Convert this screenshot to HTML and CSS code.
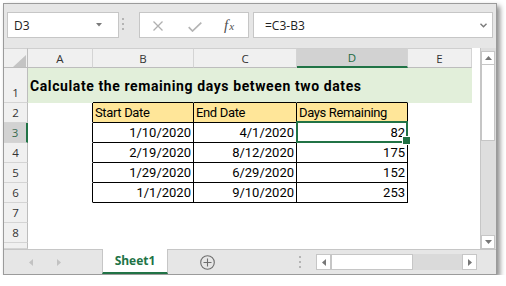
FILE: index.html
```html
<!DOCTYPE html>
<html>
<head>
<meta charset="utf-8">
<title>Excel - remaining days</title>
<link rel="stylesheet" href="styles.css">
</head>
<body>
<div class="window">
  <div class="fbar">
    <div class="namebox">
      <span>D3</span>
      <svg class="dd" width="6" height="4" viewBox="0 0 6 4"><path d="M0 0H6L3 3.5Z"/></svg>
    </div>
    <div class="grip"><i></i><i></i><i></i></div>
    <div class="fxbox">
      <svg class="x-ic" width="10" height="10" viewBox="0 0 10 10"><path d="M0.5 0.5L9.5 9.5M9.5 0.5L0.5 9.5"/></svg>
      <svg class="ok-ic" width="14" height="10" viewBox="0 0 14 10"><path d="M0.7 5.2L4.5 9L13.3 0.6"/></svg>
      <span class="fx"><i class="fx-f">f</i><i class="fx-x">x</i></span>
    </div>
    <div class="formula">
      <span>=C3-B3</span>
      <svg class="chev" width="7" height="5" viewBox="0 0 7 5"><path d="M0.5 0.8L3.5 3.8L6.5 0.8"/></svg>
    </div>
  </div>

  <div class="main">
    <div class="sheet">
      <!-- header row -->
      <div class="ch corner"><svg width="13" height="12" viewBox="0 0 13 12"><path d="M13 0V12H0Z"/></svg></div>
      <div class="ch">A</div>
      <div class="ch">B</div>
      <div class="ch">C</div>
      <div class="ch sel">D</div>
      <div class="ch">E</div>
      <div class="c gap"></div>

      <!-- row 1 -->
      <div class="rh">1</div>
      <div class="c g title">Calculate the remaining days between two dates</div>
      <div class="c g tb"></div>
      <div class="c g tb"></div>
      <div class="c g tb"></div>
      <div class="c g"></div>
      <div class="c gap"></div>

      <!-- row 2 -->
      <div class="rh">2</div>
      <div class="c tl"></div>
      <div class="c t hd">Start Date</div>
      <div class="c t hd">End Date</div>
      <div class="c t hd">Days Remaining</div>
      <div class="c"></div>
      <div class="c gap"></div>

      <!-- row 3 -->
      <div class="rh sel">3</div>
      <div class="c tl"></div>
      <div class="c t r">1/10/2020</div>
      <div class="c t r">4/1/2020</div>
      <div class="c t r active">82</div>
      <div class="c"></div>
      <div class="c gap"></div>

      <!-- row 4 -->
      <div class="rh">4</div>
      <div class="c tl"></div>
      <div class="c t r">2/19/2020</div>
      <div class="c t r">8/12/2020</div>
      <div class="c t r">175</div>
      <div class="c"></div>
      <div class="c gap"></div>

      <!-- row 5 -->
      <div class="rh">5</div>
      <div class="c tl"></div>
      <div class="c t r">1/29/2020</div>
      <div class="c t r">6/29/2020</div>
      <div class="c t r">152</div>
      <div class="c"></div>
      <div class="c gap"></div>

      <!-- row 6 -->
      <div class="rh">6</div>
      <div class="c tl"></div>
      <div class="c t r">1/1/2020</div>
      <div class="c t r">9/10/2020</div>
      <div class="c t r">253</div>
      <div class="c"></div>
      <div class="c gap"></div>

      <!-- row 7 -->
      <div class="rh">7</div>
      <div class="c"></div><div class="c"></div><div class="c"></div><div class="c"></div><div class="c"></div>
      <div class="c gap"></div>

      <!-- row 8 -->
      <div class="rh">8</div>
      <div class="c"></div><div class="c"></div><div class="c"></div><div class="c"></div><div class="c"></div>
      <div class="c gap"></div>

      <!-- row 9 (cut) -->
      <div class="rh cut">9</div>
      <div class="c"></div><div class="c"></div><div class="c"></div><div class="c"></div><div class="c"></div>
      <div class="c gap"></div>
    </div>

    <div class="vscroll">
      <div class="sbtn"><svg width="7" height="4" viewBox="0 0 7 4"><path d="M0 4H7L3.5 0Z"/></svg></div>
      <div class="vthumb"></div>
      <div class="vtrack"></div>
      <div class="sbtn"><svg width="7" height="4" viewBox="0 0 7 4"><path d="M0 0H7L3.5 4Z"/></svg></div>
    </div>
  </div>

  <div class="tabbar">
    <div class="nav">
      <svg class="navl" width="4" height="7" viewBox="0 0 4 7"><path d="M4 0V7L0 3.5Z"/></svg>
      <svg class="navr" width="4" height="7" viewBox="0 0 4 7"><path d="M0 0V7L4 3.5Z"/></svg>
    </div>
    <div class="tab">Sheet1</div>
    <svg class="add" width="15" height="15" viewBox="0 0 15 15"><circle cx="7.5" cy="7.5" r="6.8"/><path d="M7.5 3.5V11.5M3.5 7.5H11.5"/></svg>
    <div class="grip grip2"><i></i><i></i><i></i></div>
    <div class="hscroll">
      <div class="hbtn"><svg width="4" height="7" viewBox="0 0 4 7"><path d="M4 0V7L0 3.5Z"/></svg></div>
      <div class="hthumb"></div>
      <div class="htrack"></div>
      <div class="hbtn"><svg width="4" height="7" viewBox="0 0 4 7"><path d="M0 0V7L4 3.5Z"/></svg></div>
    </div>
  </div>
</div>
</body>
</html>
```

FILE: styles.css
```css
* { box-sizing: border-box; }

body {
  margin: 0;
  background: #ffffff;
}

.window {
  margin: 3px 0 0 3px;
  width: 494px;
  height: 272px;
  border: 1px solid #9b9b9b;
  background: #e6e6e6;
  box-shadow: 3px 3px 5px rgba(0, 0, 0, 0.45);
  display: flex;
  flex-direction: column;
  overflow: hidden;
}

/* ---------- formula bar ---------- */
.fbar {
  height: 44px;
  flex: none;
  display: flex;
  align-items: flex-start;
  padding: 8px 3px 0 3px;
}

.namebox {
  width: 112px;
  height: 26px;
  background: #fff;
  border: 1px solid #c6c6c6;
  display: flex;
  align-items: center;
  justify-content: space-between;
  padding: 0 16px 0 6px;
  font: 12px "Open Sans", sans-serif;
  color: #222;
}

.dd { fill: #7a7a7a; }

.grip {
  width: 20px;
  display: flex;
  flex-direction: column;
  gap: 3px;
  padding-left: 3px;
  margin-top: 6px;
}

.grip i {
  display: block;
  width: 2px;
  height: 2px;
  background: #b4b4b4;
}

.fxbox {
  width: 110px;
  height: 26px;
  background: #fff;
  border: 1px solid #c6c6c6;
  display: flex;
  align-items: center;
}

.x-ic {
  margin-left: 13px;
  margin-top: 2px;
  stroke: #b0b0b0;
  stroke-width: 1.3;
  fill: none;
}

.ok-ic {
  margin-left: 25px;
  margin-top: 3px;
  stroke: #b4b4b4;
  stroke-width: 1.7;
  fill: none;
}

.fx {
  margin-left: 22px;
  font-family: "Liberation Serif", serif;
  color: #505050;
  display: flex;
  align-items: baseline;
}

.fx-f { font-size: 15px; }
.fx-x { font-size: 11px; margin-left: 1px; }

.formula {
  flex: 1;
  margin-left: 4px;
  height: 26px;
  background: #fff;
  border: 1px solid #c6c6c6;
  display: flex;
  align-items: center;
  justify-content: space-between;
  padding: 0 5px 0 11px;
  font: 12px "Open Sans", sans-serif;
  color: #222;
}

.chev {
  stroke: #7a7a7a;
  stroke-width: 1.4;
  fill: none;
}

/* ---------- sheet ---------- */
.main {
  height: 201px;
  flex: none;
  display: flex;
  background: #fff;
}

.sheet {
  width: 476px;
  display: grid;
  grid-template-columns: 24px 65px 101px 103px 111px 64px 8px;
  grid-template-rows: 20px 35px repeat(7, 20px) 6px;
  overflow: hidden;
}

.c {
  border-right: 1px solid #fff;
  border-bottom: 1px solid #fff;
  font: 13px Roboto, sans-serif;
  color: #000;
  padding: 0 2px;
  display: flex;
  align-items: center;
  white-space: nowrap;
  overflow: hidden;
}

.c.gap { border: none; }

.r { justify-content: flex-end; }

.ch {
  background: #f0f0f0;
  border-top: 1px solid #cfcfcf;
  border-right: 1px solid #d4d4d4;
  border-bottom: 1px solid #bdbdbd;
  display: flex;
  align-items: center;
  justify-content: center;
  font: 11.5px "Open Sans", sans-serif;
  color: #333;
}

.ch.corner {
  border-right-color: #bdbdbd;
  justify-content: flex-end;
  align-items: flex-end;
  padding-right: 1px;
}

.corner svg { fill: #c4c4c4; display: block; }

.ch.sel {
  background: #d2d2d2;
  border-bottom: 2px solid #217346;
  color: #1d6b41;
}

.rh {
  background: #f0f0f0;
  border-right: 1px solid #bdbdbd;
  border-bottom: 1px solid #d4d4d4;
  display: flex;
  justify-content: center;
  align-items: flex-end;
  font: 11.5px/19px "Open Sans", sans-serif;
  color: #333;
  overflow: hidden;
}

.rh.cut { align-items: flex-start; }

.rh.sel {
  background: #d2d2d2;
  border-right: 2px solid #217346;
  color: #3b6b51;
}

.g {
  background: #e2efda;
  border-right-color: #e2efda;
  border-bottom-color: #e2efda;
}

.g.tb { border-bottom-color: #000; }

.title {
  font-weight: bold;
  font-size: 14px;
  letter-spacing: 0.6px;
  padding-top: 2px;
  position: relative;
  z-index: 1;
  overflow: visible;
}

.t {
  border-right-color: #000;
  border-bottom-color: #000;
}

.tl { border-right-color: #000; }

.hd {
  background: #ffe699;
  letter-spacing: -0.35px;
}

.active {
  position: relative;
  z-index: 2;
  overflow: visible;
}

.active::before {
  content: "";
  position: absolute;
  left: -1px;
  top: -2px;
  right: -1px;
  bottom: -1px;
  border: 2px solid #217346;
}

.active::after {
  content: "";
  position: absolute;
  right: -4px;
  bottom: -3px;
  width: 7px;
  height: 7px;
  background: #217346;
  border: 1px solid #fff;
}

/* ---------- vertical scrollbar ---------- */
.vscroll {
  width: 16px;
  flex: none;
  border-left: 1px solid #c6c6c6;
  background: #dedede;
  display: flex;
  flex-direction: column;
  padding: 3px 1px 0 0;
}

.sbtn {
  height: 14px;
  flex: none;
  background: #fff;
  border: 1px solid #c6c6c6;
  display: flex;
  align-items: center;
  justify-content: center;
}

.sbtn svg, .hbtn svg { fill: #777; display: block; }

.vthumb {
  height: 76px;
  flex: none;
  background: #fff;
  border: 1px solid #c6c6c6;
  border-top: none;
}

.vtrack { flex: 1; }

/* ---------- sheet tabs ---------- */
.tabbar {
  height: 25px;
  flex: none;
  border-top: 1px solid #c6c6c6;
  display: flex;
  align-items: center;
}

.nav {
  width: 98px;
  display: flex;
  align-items: center;
  padding-left: 25px;
}

.nav svg { fill: #c2c2c2; display: block; }
.navr { margin-left: 24px; }

.tab {
  width: 66px;
  align-self: stretch;
  margin-top: -1px;
  background: #fff;
  border-left: 1px solid #c6c6c6;
  border-right: 1px solid #c6c6c6;
  border-bottom: 2px solid #217346;
  display: flex;
  align-items: center;
  justify-content: center;
  font: bold 12px "Open Sans", sans-serif;
  color: #217346;
}

.add {
  margin-left: 32px;
  fill: none;
  stroke: #6e6e6e;
  stroke-width: 1.1;
  display: block;
}

.grip2 {
  width: 2px;
  padding-left: 0;
  margin: 0 0 0 84px;
}

.hscroll {
  margin-left: 15px;
  width: 161px;
  height: 16px;
  display: flex;
}

.hbtn {
  width: 15px;
  background: #fff;
  border: 1px solid #c6c6c6;
  display: flex;
  align-items: center;
  justify-content: center;
}

.hthumb {
  width: 82px;
  background: #fff;
  border: 1px solid #c6c6c6;
}

.htrack {
  width: 49px;
  background: #dadada;
}
```
